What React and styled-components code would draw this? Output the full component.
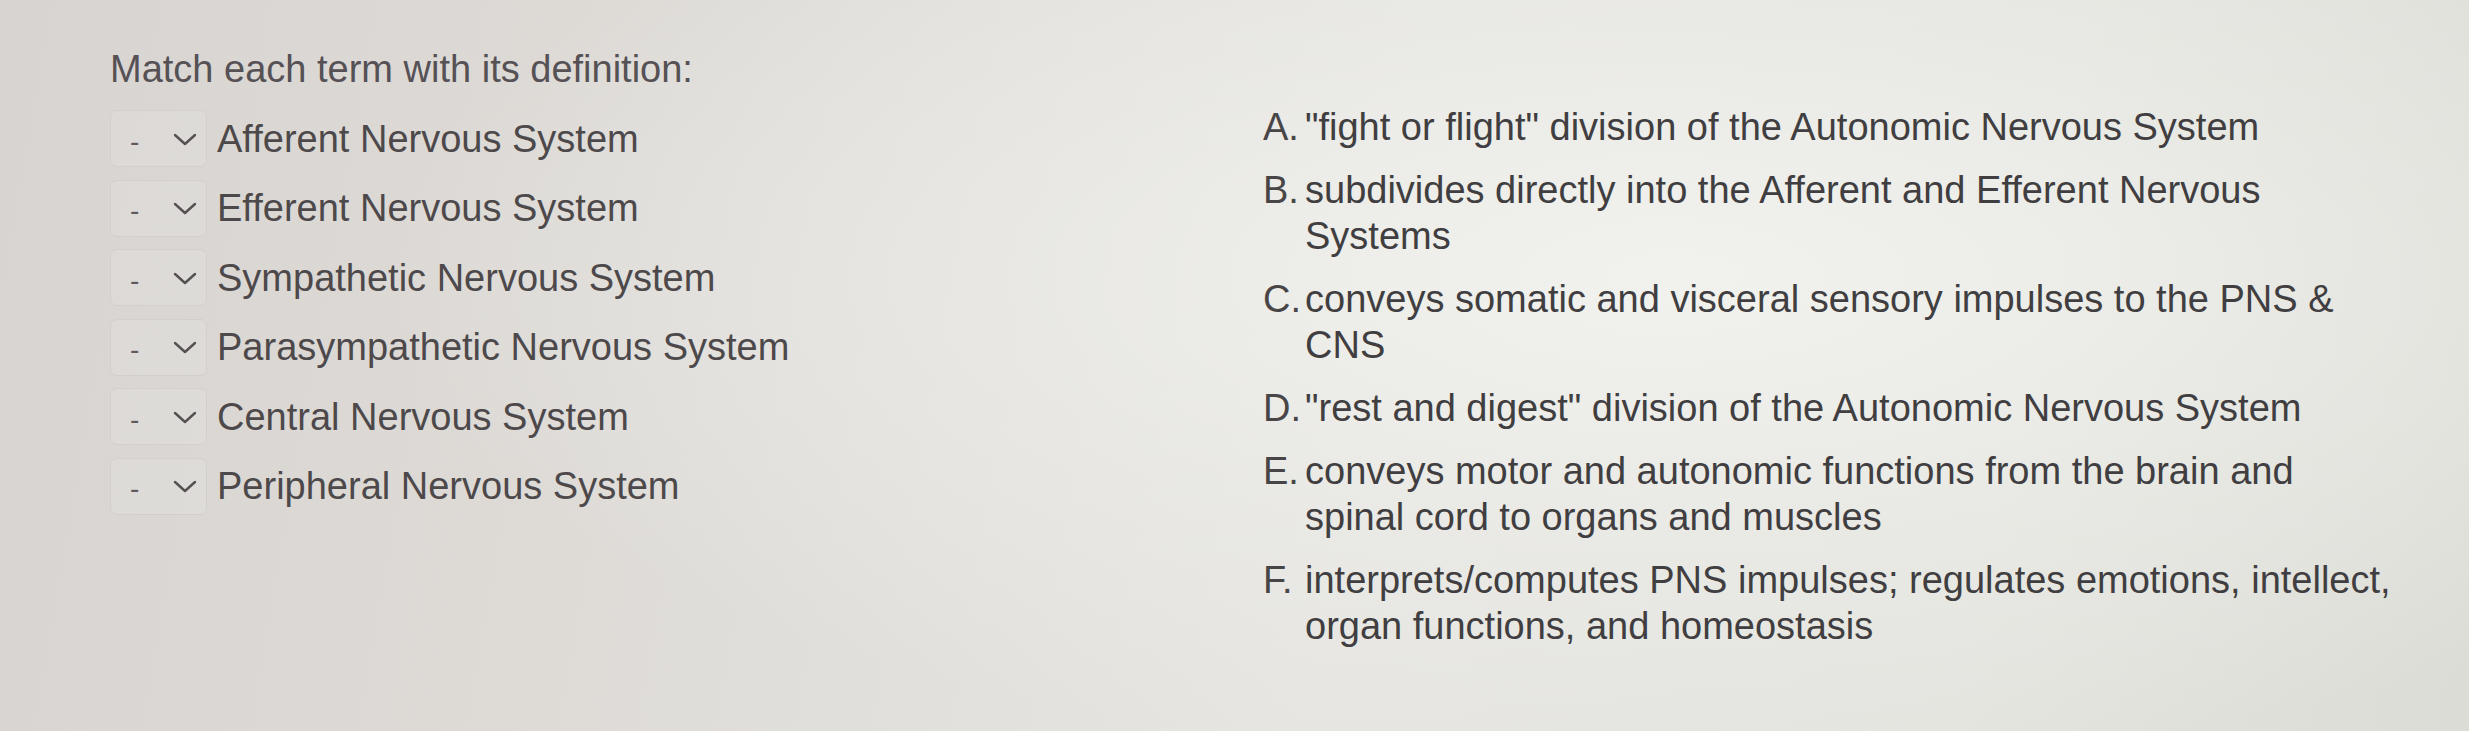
import React from "react";
import styled, { createGlobalStyle } from "styled-components";

const GlobalStyle = createGlobalStyle`
  html, body {
    margin: 0;
    padding: 0;
  }
  body {
    width: 2469px;
    height: 731px;
    overflow: hidden;
    font-family: "Liberation Sans", Arial, Helvetica, sans-serif;
    background: #e3e1dd;
  }
`;

const Page = styled.main`
  box-sizing: border-box;
  width: 2469px;
  height: 731px;
  padding: 50px 0 0 110px;
  background:
    radial-gradient(ellipse 70% 90% at 68% 38%, rgba(242, 242, 239, 0.95) 0%, rgba(236, 236, 232, 0.6) 40%, rgba(236, 236, 232, 0) 75%),
    linear-gradient(100deg, #d8d4d1 0%, #dedbd7 25%, #e6e5e1 55%, #e4e4df 80%, #dcdcd6 100%);
  color: #4b484a;
`;

const Heading = styled.h2`
  margin: 0;
  font-size: 38px;
  line-height: 38px;
  font-weight: 400;
  color: #555155;
`;

const Columns = styled.div`
  display: grid;
  grid-template-columns: 1153px 1140px;
  align-items: start;
  margin-top: 16px;
`;

const TermList = styled.ul`
  list-style: none;
  margin: 6px 0 0 0;
  padding: 0;
  display: flex;
  flex-direction: column;
  gap: 12.6px;
`;

const TermRow = styled.li`
  display: flex;
  align-items: center;
  gap: 10px;
  height: 57px;
`;

const SelectBox = styled.div`
  box-sizing: border-box;
  width: 97px;
  height: 57px;
  flex: none;
  display: flex;
  align-items: center;
  justify-content: space-between;
  padding: 0 8px 0 19px;
  border: 1.5px solid #d3cfcb;
  border-radius: 7px;
  background: rgba(255, 255, 255, 0.1);
`;

const Dash = styled.span`
  font-size: 28px;
  line-height: 1;
  color: #5f5b5d;
  transform: translateY(3px);
`;

const Chevron = styled.svg`
  width: 26px;
  height: 16px;
  display: block;
`;

const TermLabel = styled.span`
  font-size: 38px;
  line-height: 38px;
  color: #4d494b;
  white-space: nowrap;
`;

const DefinitionList = styled.ol`
  list-style: none;
  margin: 0;
  padding: 0;
  display: flex;
  flex-direction: column;
  gap: 17px;
`;

const DefinitionItem = styled.li`
  display: grid;
  grid-template-columns: 42px 1094px;
  font-size: 38px;
  line-height: 46px;
  color: #403e40;
`;

const Letter = styled.span`
  color: #484547;
`;

const DefinitionText = styled.span``;

const terms = [
  "Afferent Nervous System",
  "Efferent Nervous System",
  "Sympathetic Nervous System",
  "Parasympathetic Nervous System",
  "Central Nervous System",
  "Peripheral Nervous System",
];

const definitions = [
  ["A.", "\"fight or flight\" division of the Autonomic Nervous System"],
  ["B.", "subdivides directly into the Afferent and Efferent Nervous Systems"],
  ["C.", "conveys somatic and visceral sensory impulses to the PNS & CNS"],
  ["D.", "\"rest and digest\" division of the Autonomic Nervous System"],
  ["E.", "conveys motor and autonomic functions from the brain and spinal cord to organs and muscles"],
  ["F.", "interprets/computes PNS impulses; regulates emotions, intellect, organ functions, and homeostasis"],
];

function MatchSelect() {
  return (
    <SelectBox role="combobox" aria-label="answer">
      <Dash>-</Dash>
      <Chevron viewBox="0 0 26 16" fill="none">
        <path
          d="M3 4 L13 13 L23 4"
          stroke="#555153"
          strokeWidth="2.4"
          strokeLinecap="round"
          strokeLinejoin="round"
        />
      </Chevron>
    </SelectBox>
  );
}

export default function App() {
  return (
    <>
      <GlobalStyle />
      <Page>
        <Heading>Match each term with its definition:</Heading>
        <Columns>
          <TermList>
            {terms.map((t) => (
              <TermRow key={t}>
                <MatchSelect />
                <TermLabel>{t}</TermLabel>
              </TermRow>
            ))}
          </TermList>
          <DefinitionList>
            {definitions.map(([letter, text]) => (
              <DefinitionItem key={letter}>
                <Letter>{letter}</Letter>
                <DefinitionText>{text}</DefinitionText>
              </DefinitionItem>
            ))}
          </DefinitionList>
        </Columns>
      </Page>
    </>
  );
}
